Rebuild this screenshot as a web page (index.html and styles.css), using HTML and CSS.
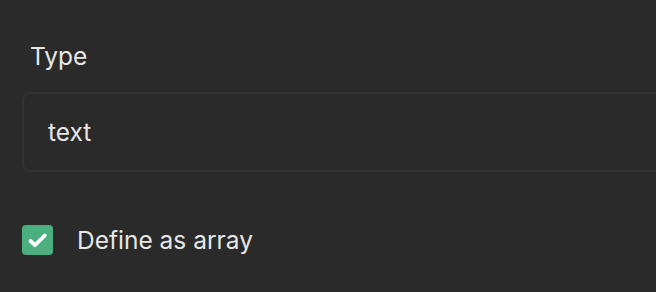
FILE: index.html
```html
<!DOCTYPE html>
<html>
<head>
<meta charset="utf-8">
<link rel="stylesheet" href="styles.css">
</head>
<body>
<div class="panel">
  <div class="field">
    <div class="label">Type</div>
    <div class="input">text</div>
  </div>
  <label class="check-row">
    <span class="checkbox">
      <svg viewBox="0 0 31 30" width="31" height="30"><path d="M8.5 16l4.5 4.2L22.8 10.5" fill="none" stroke="#fff" stroke-width="3.8" stroke-linecap="round" stroke-linejoin="round"/></svg>
    </span>
    <span class="check-label">Define as array</span>
  </label>
</div>
</body>
</html>
```
FILE: styles.css
```css
html, body {
  margin: 0;
  padding: 0;
  background: #2a2a2a;
  width: 656px;
  height: 292px;
  overflow: hidden;
}
.panel {
  padding: 40px 0 0 22px;
  font-family: Inter, "Open Sans", sans-serif;
  color: #e6e6e6;
  overflow: hidden;
}
.label {
  font-size: 24.5px;
  line-height: 32px;
  padding-left: 8px;
  margin-bottom: 20px;
}
.input {
  box-sizing: border-box;
  width: calc(100% + 20px);
  height: 80px;
  border: 2px solid #333333;
  border-radius: 8px;
  padding-left: 24px;
  display: flex;
  align-items: center;
  font-size: 24.5px;
}
.check-row {
  display: flex;
  align-items: center;
  gap: 24px;
  margin-top: 53px;
}
.checkbox {
  width: 31px;
  height: 30px;
  border-radius: 4px;
  background: #4caf7f;
  display: block;
  flex: none;
}
.checkbox svg {
  display: block;
}
.check-label {
  font-size: 24.5px;
}
```
